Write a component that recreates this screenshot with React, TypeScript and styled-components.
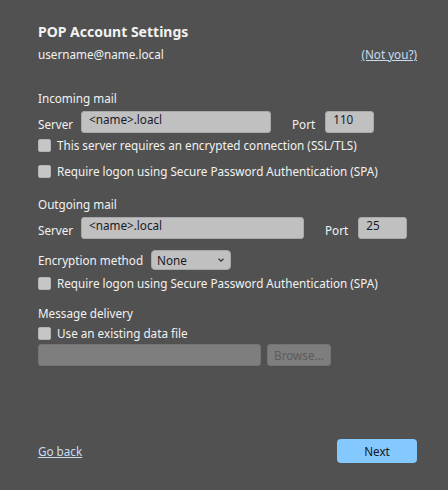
import styled, { createGlobalStyle } from "styled-components";

const GlobalStyle = createGlobalStyle`
  html, body {
    margin: 0;
    padding: 0;
    background: #515151;
  }
  body {
    font-family: "Noto Sans", "Open Sans", sans-serif;
    color: #f2f2f2;
  }
`;

const Page = styled.div`
  width: 448px;
  height: 490px;
  box-sizing: border-box;
  padding: 22px 31px 0 38px;
  display: flex;
  flex-direction: column;
  background: #515151;
  font-size: 11.7px;
`;

const Title = styled.h1`
  margin: 0;
  font-size: 14px;
  font-weight: 700;
  line-height: 20px;
`;

const AccountRow = styled.div`
  display: flex;
  justify-content: space-between;
  align-items: center;
  margin-top: 4px;
  line-height: 16px;
`;

const Link = styled.a`
  color: #c8dcf0;
  text-decoration: underline;
  cursor: pointer;
`;

const Section = styled.section`
  display: flex;
  flex-direction: column;
  margin-top: ${(p: { $top: number }) => p.$top}px;
`;

const SectionTitle = styled.div`
  line-height: 16px;
  margin-bottom: 5px;
`;

const FieldRow = styled.div`
  display: flex;
  align-items: center;
  height: 22px;
`;

const Label = styled.span`
  width: 43px;
  padding-top: 4px;
`;

const PortLabel = styled.span`
  margin: 0 10px 0 21px;
  padding-top: 4px;
`;

const TextBox = styled.div<{ $w: number; $disabled?: boolean }>`
  width: ${(p) => p.$w}px;
  height: 22px;
  box-sizing: border-box;
  border: 1px solid ${(p) => (p.$disabled ? "#747474" : "#a8a8a8")};
  border-radius: 3px;
  background: ${(p) => (p.$disabled ? "#7e7e7e" : "#c0c0c0")};
  color: #1a1a2a;
  padding: 0 7px;
  line-height: 14px;
`;

const CheckRow = styled.label`
  display: flex;
  align-items: center;
  gap: 6px;
  height: 16px;
  margin-top: ${(p: { $top: number }) => p.$top}px;
`;

const Box = styled.span`
  width: 13px;
  height: 13px;
  box-sizing: border-box;
  border-radius: 2px;
  background: #c6c6c6;
  border: 1px solid #b4b4b4;
`;

const SelectRow = styled.div`
  display: flex;
  align-items: center;
  gap: 8px;
  margin-top: 11px;
`;

const Select = styled.div`
  width: 80px;
  height: 20px;
  box-sizing: border-box;
  border: 1px solid #a8a8a8;
  border-radius: 4px;
  background: #c0c0c0;
  color: #1a1a1a;
  display: flex;
  align-items: center;
  justify-content: space-between;
  padding: 0 5px;
`;

const FileRow = styled.div`
  display: flex;
  gap: 6px;
  margin-top: 3px;
`;

const BrowseButton = styled.button`
  width: 64px;
  height: 22px;
  border: 1px solid #747474;
  border-radius: 3px;
  background: #7e7e7e;
  color: #5c5c5c;
  font-family: inherit;
  font-size: inherit;
  padding: 0;
`;

const Footer = styled.div`
  margin-top: auto;
  margin-bottom: 27px;
  display: flex;
  justify-content: space-between;
  align-items: center;
`;

const NextButton = styled.button`
  width: 80px;
  height: 24px;
  border: none;
  border-radius: 4px;
  background: #83c8ff;
  color: #1a1a1a;
  font-family: inherit;
  font-size: inherit;
  padding: 0;
`;

const Chevron = () => (
  <svg width="8" height="6" viewBox="0 0 8 6">
    <path d="M1.5 1.8 L4 4.2 L6.5 1.8" stroke="#333" strokeWidth="1.2" fill="none" />
  </svg>
);

const Check = ({ text, top }: { text: string; top: number }) => (
  <CheckRow $top={top}>
    <Box />
    {text}
  </CheckRow>
);

const App = () => (
  <>
    <GlobalStyle />
    <Page>
      <Title>POP Account Settings</Title>
      <AccountRow>
        username@name.local
        <Link>(Not you?)</Link>
      </AccountRow>

      <Section $top={28}>
        <SectionTitle>Incoming mail</SectionTitle>
        <FieldRow>
          <Label>Server</Label>
          <TextBox $w={190}>&lt;name&gt;.loacl</TextBox>
          <PortLabel>Port</PortLabel>
          <TextBox $w={49}>110</TextBox>
        </FieldRow>
        <Check top={4} text="This server requires an encrypted connection (SSL/TLS)" />
        <Check top={10} text="Require logon using Secure Password Authentication (SPA)" />
      </Section>

      <Section $top={17}>
        <SectionTitle>Outgoing mail</SectionTitle>
        <FieldRow>
          <Label>Server</Label>
          <TextBox $w={223}>&lt;name&gt;.local</TextBox>
          <PortLabel>Port</PortLabel>
          <TextBox $w={49}>25</TextBox>
        </FieldRow>
        <SelectRow>
          Encryption method
          <Select>
            None
            <Chevron />
          </Select>
        </SelectRow>
        <Check top={5} text="Require logon using Secure Password Authentication (SPA)" />
      </Section>

      <Section $top={14}>
        <SectionTitle>Message delivery</SectionTitle>
        <Check top={-1} text="Use an existing data file" />
        <FileRow>
          <TextBox $w={223} $disabled />
          <BrowseButton>Browse...</BrowseButton>
        </FileRow>
      </Section>

      <Footer>
        <Link>Go back</Link>
        <NextButton>Next</NextButton>
      </Footer>
    </Page>
  </>
);

export default App;
